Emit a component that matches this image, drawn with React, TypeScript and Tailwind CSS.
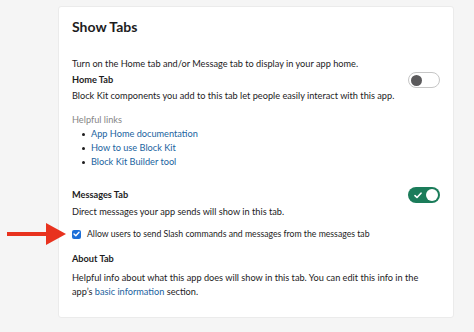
import React from "react";

function ToggleOff() {
  return (
    <div className="w-[32px] h-[16px] rounded-full border border-[#c6c6c6] bg-white flex items-center px-[2px] shrink-0">
      <div className="w-[11px] h-[11px] rounded-full bg-[#5b5a5c]" />
    </div>
  );
}

function ToggleOn() {
  return (
    <div className="w-[32px] h-[16px] rounded-full bg-[#1b7c5a] flex items-center justify-between pl-[6px] pr-[2px] shrink-0">
      <svg width="8" height="7" viewBox="0 0 8 7" fill="none">
        <path d="M1 3.6 L3 5.5 L7 1.2" stroke="white" strokeWidth="1.6" strokeLinecap="round" strokeLinejoin="round" />
      </svg>
      <div className="w-[12px] h-[12px] rounded-full bg-white" />
    </div>
  );
}

export default function App() {
  return (
    <div
      className="relative w-[474px] h-[332px] bg-[#f5f5f5] pt-[6px] pl-[58px] overflow-hidden"
      style={{ fontFamily: "Lato, 'Noto Sans', sans-serif" }}
    >
      <div className="w-[396px] h-[312px] bg-white border border-[#ebebeb] rounded-[3px] pl-[13px] pr-[13px] pt-[10px] text-[#1d1c1d]">
        <div className="text-[14px] leading-[20px] font-bold">Show Tabs</div>
        <p className="mt-[20px] text-[9.2px] leading-[14px]">
          Turn on the Home tab and/or Message tab to display in your app home.
        </p>
        <div className="mt-[1px] h-[16px] flex items-center justify-between">
          <span className="text-[9.2px] leading-[14px] font-bold">Home Tab</span>
          <ToggleOff />
        </div>
        <p className="mt-[1px] text-[9.2px] leading-[14px]">
          Block Kit components you add to this tab let people easily interact with this app.
        </p>
        <div className="mt-[10px] text-[9.2px] leading-[14px] text-[#868686]">Helpful links</div>
        <ul className="text-[9.2px] leading-[14px] text-[#1a63a0]">
          {["App Home documentation", "How to use Block Kit", "Block Kit Builder tool"].map((t) => (
            <li key={t} className="flex items-center">
              <span className="w-[19px] flex justify-end pr-[6px]">
                <span className="w-[3px] h-[3px] rounded-full bg-[#1d1c1d]" />
              </span>
              <span>{t}</span>
            </li>
          ))}
        </ul>
        <div className="mt-[18px] h-[16px] flex items-center justify-between">
          <span className="text-[9.2px] leading-[14px] font-bold">Messages Tab</span>
          <ToggleOn />
        </div>
        <p className="mt-[2px] text-[9.2px] leading-[14px]">
          Direct messages your app sends will show in this tab.
        </p>
        <div className="mt-[8px] flex items-center text-[8.7px] leading-[14px]">
          <span className="w-[9px] h-[9px] rounded-[2px] bg-[#1d6fd8] flex items-center justify-center mr-[6px]">
            <svg width="7" height="6" viewBox="0 0 7 6" fill="none">
              <path d="M1 3 L2.8 4.7 L6 1.2" stroke="white" strokeWidth="1.4" strokeLinecap="round" strokeLinejoin="round" />
            </svg>
          </span>
          <span>Allow users to send Slash commands and messages from the messages tab</span>
        </div>
        <div className="mt-[11px] text-[9.2px] leading-[14px] font-bold">About Tab</div>
        <p className="mt-[5px] text-[9.2px] leading-[13.5px]">
          Helpful info about what this app does will show in this tab. You can edit this info in the app’s{" "}
          <span className="text-[#1a63a0]">basic information</span> section.
        </p>
      </div>
      <svg className="absolute left-[6px] top-[222px]" width="62" height="24" viewBox="0 0 62 24">
        <rect x="1" y="10" width="42" height="4" fill="#e8321e" />
        <polygon points="40,1 60,12 40,23" fill="#e8321e" />
      </svg>
    </div>
  );
}
